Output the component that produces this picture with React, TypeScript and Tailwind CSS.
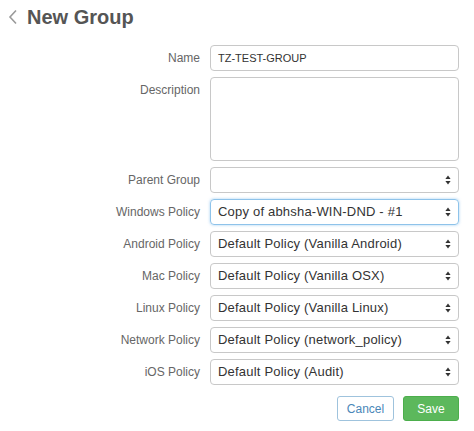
import React from 'react';

const POLICIES: { label: string; value: string; focused?: boolean }[] = [
  { label: 'Parent Group', value: '' },
  { label: 'Windows Policy', value: 'Copy of abhsha-WIN-DND - #1', focused: true },
  { label: 'Android Policy', value: 'Default Policy (Vanilla Android)' },
  { label: 'Mac Policy', value: 'Default Policy (Vanilla OSX)' },
  { label: 'Linux Policy', value: 'Default Policy (Vanilla Linux)' },
  { label: 'Network Policy', value: 'Default Policy (network_policy)' },
  { label: 'iOS Policy', value: 'Default Policy (Audit)' },
];

function Arrows() {
  return (
    <svg width="6" height="10" viewBox="0 0 6 10" className="shrink-0">
      <path d="M3 0.5 L5.6 4 H0.4 Z" fill="#333" />
      <path d="M3 9.5 L5.6 6 H0.4 Z" fill="#333" />
    </svg>
  );
}

function Row({ label, children }: { label: string; children: React.ReactNode }) {
  return (
    <div className="flex items-start">
      <div className="w-[200px] shrink-0 text-right text-[12px] leading-[26px] text-[#666]">{label}</div>
      <div className="ml-[10px] w-[249px]">{children}</div>
    </div>
  );
}

export default function App() {
  return (
    <div className="h-[431px] w-[474px] bg-white" style={{ fontFamily: '"Liberation Sans", Arial, sans-serif' }}>
      <div className="flex h-[36px] items-center pl-[8px] pb-[2px]">
        <svg width="10" height="16" viewBox="0 0 10 16" className="mr-[9px]">
          <path d="M8 1.5 L2 8 L8 14.5" fill="none" stroke="#9a9a9a" strokeWidth="1.6" />
        </svg>
        <h1 className="text-[20px] font-bold text-[#555]">New Group</h1>
      </div>

      <div className="mt-[9px] flex flex-col gap-[6px]">
        <Row label="Name">
          <div className="flex h-[26px] items-center rounded-[4px] border border-[#c8c8c8] px-[7px] text-[11px] text-[#333]">
            TZ-TEST-GROUP
          </div>
        </Row>
        <Row label="Description">
          <div className="h-[84px] rounded-[4px] border border-[#c8c8c8]" />
        </Row>
        {POLICIES.map((p) => (
          <Row key={p.label} label={p.label}>
            <div
              className={
                p.focused
                  ? 'flex h-[26px] items-center justify-between rounded-[4px] border border-[#8ec3ea] px-[7px] text-[13px] tracking-[0.2px] text-[#333] shadow-[0_0_3px_rgba(102,175,233,0.6)]'
                  : 'flex h-[26px] items-center justify-between rounded-[4px] border border-[#c8c8c8] px-[7px] text-[13px] tracking-[0.2px] text-[#333]'
              }
            >
              <span>{p.value}</span>
              <Arrows />
            </div>
          </Row>
        ))}
      </div>

      <div className="mt-[11px] flex justify-end gap-[9px] pr-[15px]">
        <button className="flex h-[25px] w-[57px] items-center justify-center rounded-[3px] border border-[#9fc3dd] bg-white text-[12px] text-[#4a87b8]">
          Cancel
        </button>
        <button className="flex h-[25px] w-[56px] items-center justify-center rounded-[3px] border border-[#4cae4c] bg-[#5cb85c] text-[12px] text-white">
          Save
        </button>
      </div>
    </div>
  );
}
